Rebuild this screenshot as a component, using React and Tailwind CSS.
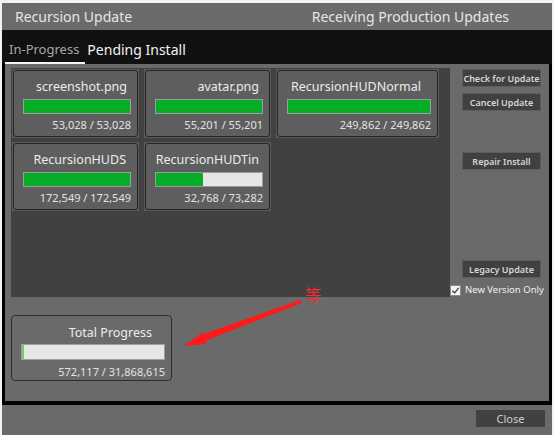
const FILES = [
  { name: 'screenshot.png', done: 53028, total: 53028, wide: false, align: 'pr-[4px] text-right' },
  { name: 'avatar.png', done: 55201, total: 55201, wide: false, align: 'pr-[4px] text-right' },
  { name: 'RecursionHUDNormal', done: 249862, total: 249862, wide: true, align: 'pl-[4px] text-left' },
  { name: 'RecursionHUDS', done: 172549, total: 172549, wide: false, align: 'pr-[5px] text-right' },
  { name: 'RecursionHUDTin', done: 32768, total: 73282, wide: false, align: 'pr-[4px] text-right' },
];

const fmt = (n) => n.toLocaleString('en-US');

function Bar({ done, total }) {
  const pct = Math.max(0, Math.min(100, (done / total) * 100));
  return (
    <div className="h-[15px] border border-[#9c9c9c] bg-[#e6e6e6]">
      <div className="h-full bg-[#06ad26]" style={{ width: `${pct}%` }} />
    </div>
  );
}

function FileCard({ file }) {
  return (
    <div className={`bg-[#585858] p-[1px] ${file.wide ? 'w-[163px]' : 'w-[127px]'}`}>
      <div className="h-[67px] rounded-[3px] border border-[#262626] bg-[#5e5e5e] pl-[9px] pr-[6px] pt-[7px]">
        <div className={`whitespace-nowrap text-[12.5px] leading-[17px] text-[#ececec] ${file.align}`}>{file.name}</div>
        <div className="mt-[4px]">
          <Bar done={file.done} total={file.total} />
        </div>
        <div className="mt-[4px] whitespace-nowrap text-right text-[11px] leading-[14px] text-[#e2e2e2]">
          {fmt(file.done)} / {fmt(file.total)}
        </div>
      </div>
    </div>
  );
}

function SideButton({ children, className = '' }) {
  return (
    <button className={`h-[18px] w-[79px] whitespace-nowrap border border-[#5c5c5c] bg-[#404040] text-[9px] font-semibold leading-none text-[#d6d6d6] ${className}`}>
      {children}
    </button>
  );
}

export default function App() {
  return (
    <div className="relative h-[435px] w-[554px] overflow-hidden bg-[#f2f2f2]" style={{ fontFamily: '"Noto Sans", "Open Sans", sans-serif' }}>
      <div className="ml-[2px] mt-[3px] flex h-[432px] w-[550px] flex-col bg-[#6a6a6a]">
        {/* title bar */}
        <div className="flex h-[27px] items-center justify-between bg-[#6b6b6b] pl-[13px] pr-[43px] text-[14px] text-[#e6e6e6]">
          <span>Recursion Update</span>
          <span>Receiving Production Updates</span>
        </div>

        {/* tabs */}
        <div className="flex h-[34px] items-end bg-[#111111] pl-[7px]">
          <div className="relative pb-[5px] pr-[8px] text-[13px] text-[#a8a8a8]">
            In-Progress
            <div className="absolute -left-[4px] bottom-0 h-[2px] w-[80px] bg-[#f4f4f4]" />
          </div>
          <div className="pb-[4px] text-[14px] text-[#f2f2f2]">Pending Install</div>
        </div>

        {/* main frame */}
        <div className="flex h-[341px] border-x-[3px] border-b-[4px] border-black bg-[#6a6a6a] pl-[6px] pt-[4px]">
          <div className="flex flex-col">
            <div className="h-[229px] w-[439px] bg-[#414141] pl-[1px] pt-[1px]">
              <div className="flex flex-wrap gap-x-[5px] gap-y-[4px]">
                {FILES.map((f) => (
                  <FileCard key={f.name} file={f} />
                ))}
              </div>
            </div>

            <div className="mt-[18px] h-[66px] w-[161px] rounded-[4px] border border-[#2c2c2c] pl-[9px] pr-[6px] pt-[8px]">
              <div className="pr-[13px] text-right text-[12.5px] leading-[18px] text-[#ececec]">Total Progress</div>
              <div className="mt-[2px]">
                <div className="h-[16px] border border-[#a0a0a0] bg-[#e6e6e6]">
                  <div className="h-full w-[2px] bg-[#5ed85e]" />
                </div>
              </div>
              <div className="mt-[5px] text-right text-[11px] leading-[14px] text-[#e2e2e2]">572,117 / 31,868,615</div>
            </div>
          </div>

          <div className="flex w-[97px] flex-col items-end pr-[6px]">
            <SideButton className="mt-[1px]">Check for Update</SideButton>
            <SideButton className="mt-[6px]">Cancel Update</SideButton>
            <SideButton className="mt-[41px]">Repair Install</SideButton>
            <SideButton className="mt-[90px]">Legacy Update</SideButton>
            <label className="mt-[5px] flex w-full items-center gap-[4px] whitespace-nowrap text-[9.5px] text-[#f0f0f0]">
              <span className="flex h-[11px] w-[11px] shrink-0 items-center justify-center border border-[#8a8a8a] bg-[#f4f4f4]">
                <svg width="9" height="9" viewBox="0 0 10 10" fill="none" stroke="#333" strokeWidth="1.4">
                  <polyline points="1.5 5.2 4 7.6 8.6 2" />
                </svg>
              </span>
              New Version Only
            </label>
          </div>
        </div>

        {/* bottom bar */}
        <div className="flex flex-1 justify-end pr-[7px] pt-[5px]">
          <button className="h-[17px] w-[69px] bg-[#414141] text-[11px] leading-none text-[#cfcfcf]">Close</button>
        </div>
      </div>

      {/* red annotation */}
      <svg className="pointer-events-none absolute left-0 top-0" width="554" height="435">
        <polygon points="300,300 201,335 203,332 184,346 207,344 205,341 302,303" fill="#ff1a1a" />
      </svg>
      <div className="pointer-events-none absolute left-[305px] top-[286px] text-[16px] leading-none text-[#ff2a2a]" style={{ fontFamily: '"Noto Sans CJK SC", serif' }}>
        等
      </div>
    </div>
  );
}
